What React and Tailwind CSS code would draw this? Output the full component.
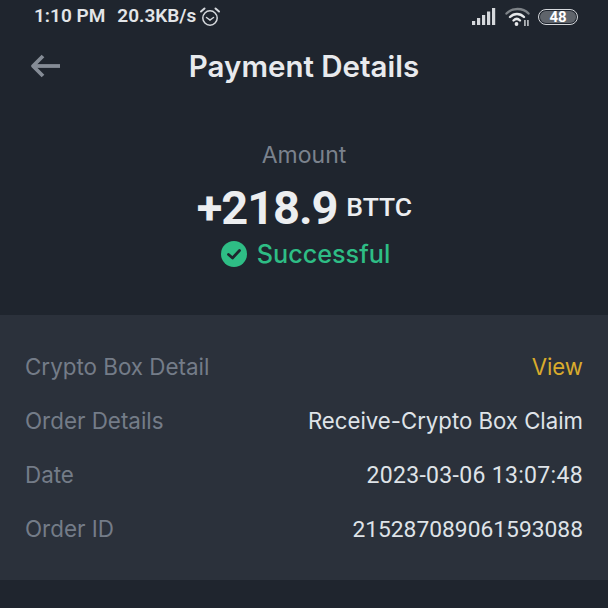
const rows = [
    { label: "Crypto Box Detail", value: "View", color: "text-[#d9ab2c] font-['Inter',sans-serif] text-[22.2px]" },
    { label: "Order Details", value: "Receive-Crypto Box Claim", color: "text-[#dfe3e8] font-['Inter',sans-serif] text-[22.2px]" },
    { label: "Date", value: "2023-03-06 13:07:48", color: "text-[#dfe3e8] font-['Roboto',sans-serif] text-[23px] tracking-[0.32px] pt-[2px]" },
    { label: "Order ID", value: "215287089061593088", color: "text-[#dfe3e8] font-['Roboto',sans-serif] text-[22.8px] pt-[2px]" },
];

const AlarmIcon = () => (
    <svg width="22" height="22" viewBox="0 0 22 22" fill="none" stroke="#d5d8dc" strokeWidth="1.5" strokeLinecap="round">
        <circle cx="11" cy="12" r="7.2" />
        <path d="M7.5 11.5 L11 14 L14.5 11.5" />
        <path d="M2 5.5 L5.5 2.5" strokeWidth="2" />
        <path d="M20 5.5 L16.5 2.5" strokeWidth="2" />
    </svg>
);

const SignalIcon = () => (
    <svg width="24" height="17" viewBox="0 0 24 17" fill="#d5d8dc">
        <rect x="0" y="13" width="3.2" height="4" />
        <rect x="5" y="10" width="3.2" height="7" />
        <rect x="10" y="7" width="3.2" height="10" />
        <rect x="15" y="3.5" width="3.2" height="13.5" />
        <rect x="20" y="0" width="3.2" height="17" />
    </svg>
);

const WifiIcon = () => (
    <svg width="26" height="20" viewBox="0 0 26 20" fill="none" stroke="#e6e8ea" strokeLinecap="round">
        <path d="M1.5 6.5 C7 0.5 18 0.5 23.5 6.5" strokeWidth="2.4" stroke="#7d8287" />
        <path d="M5 10 C9 6 15 6 19 10" strokeWidth="2.4" />
        <path d="M8.5 13.5 C10.5 11.5 13 11.5 15 13.5" strokeWidth="2.4" />
        <circle cx="11.5" cy="17" r="1.9" fill="#e6e8ea" stroke="none" />
        <rect x="19" y="13" width="1.8" height="6" fill="#aeb2b6" stroke="none" />
        <rect x="22" y="13" width="1.8" height="6" fill="#aeb2b6" stroke="none" />
    </svg>
);

const BackIcon = () => (
    <svg width="32" height="26" viewBox="0 0 32 26" fill="none" stroke="#858c96" strokeWidth="3.8" strokeLinejoin="round">
        <path d="M31 13 H4" />
        <path d="M14 3 L4 13 L14 23" />
    </svg>
);

const SuccessIcon = () => (
    <svg width="26" height="26" viewBox="0 0 26 26">
        <circle cx="13" cy="13" r="13" fill="#2ebd85" />
        <path d="M7.5 13.5 L11.5 17 L18.5 9.5" fill="none" stroke="#1f252e" strokeWidth="2.8" strokeLinecap="round" strokeLinejoin="round" />
    </svg>
);

const App = () => {
    return (
        <div className="w-[608px] h-[608px] overflow-hidden bg-[#1f252e] font-['Inter',sans-serif]">
            <div className="h-[33px] pl-[34px] pr-[30px] flex items-center justify-between">
                <div className="flex items-center text-[#e3e5e8] text-[19px] font-semibold font-['Roboto',sans-serif]">
                    <span>1:10 PM</span>
                    <span className="ml-[12px]">20.3KB/s</span>
                    <span className="ml-[3px]"><AlarmIcon /></span>
                </div>
                <div className="flex items-center">
                    <SignalIcon />
                    <span className="ml-[9px]"><WifiIcon /></span>
                    <span className="ml-[7px] w-[40px] h-[16px] rounded-full border border-[#d5d8dc] p-[1px] flex">
                        <span className="w-full rounded-full bg-[#5f646b] text-white text-[15px] leading-[12px] font-bold text-center font-['Roboto',sans-serif]">48</span>
                    </span>
                </div>
            </div>

            <div className="relative h-[66px] flex items-center justify-center">
                <span className="absolute left-[29px] top-[20px]"><BackIcon /></span>
                <h1 className="text-[#e8eaed] text-[29.5px] font-semibold">Payment Details</h1>
            </div>

            <div className="h-[216px] flex flex-col items-center">
                <p className="mt-[42px] text-[#7b828d] text-[23px] leading-[28px]">Amount</p>
                <div className="mt-[14px] ml-[1px] flex items-start text-[#eceef0] font-['Roboto',sans-serif]">
                    <span className="text-[47px] leading-[50px] font-bold tracking-[-1.1px]">+218.9</span>
                    <span className="ml-[9px] mt-[8px] text-[26.5px] leading-[32px] font-medium">BTTC</span>
                </div>
                <div className="mt-[5px] ml-[3px] flex items-center gap-[10px]">
                    <SuccessIcon />
                    <span className="text-[#2ebd85] text-[25.2px] leading-[32px] font-medium">Successful</span>
                </div>
            </div>

            <div className="h-[265px] bg-[#2b313b] px-[25px] pt-[25px] flex flex-col">
                {rows.map((row, idx) => (
                    <div className="h-[54px] shrink-0 flex items-center justify-between" key={idx}>
                        <span className="text-[#747c88] text-[22.4px]">{row.label}</span>
                        <span className={row.color}>{row.value}</span>
                    </div>
                ))}
            </div>
        </div>
    );
};

export default App;
